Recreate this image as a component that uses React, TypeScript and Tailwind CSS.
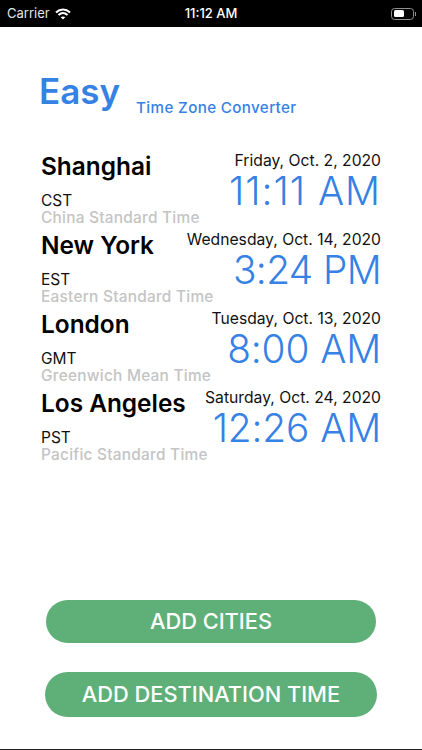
const cities = [
  { name: "Shanghai", abbr: "CST", full: "China Standard Time", date: "Friday, Oct. 2, 2020", time: "11:11 AM", timeClass: "tracking-[1px]" },
  { name: "New York", abbr: "EST", full: "Eastern Standard Time", date: "Wednesday, Oct. 14, 2020", time: "3:24 PM", timeClass: "tracking-[-0.6px]" },
  { name: "London", abbr: "GMT", full: "Greenwich Mean Time", date: "Tuesday, Oct. 13, 2020", time: "8:00 AM", timeClass: "tracking-[-0.1px]" },
  { name: "Los Angeles", abbr: "PST", full: "Pacific Standard Time", date: "Saturday, Oct. 24, 2020", time: "12:26 AM", timeClass: "tracking-[-0.1px]" },
];

function Wifi() {
  return (
    <svg width="16" height="12" viewBox="0 0 16 12" fill="none" stroke="white" strokeWidth="2.1">
      <path d="M1 4.4C5 .6 11 .6 15 4.4" />
      <path d="M3.5 7c2.7-2.4 6.3-2.4 9 0" />
      <path d="M8 11.6 5.7 9.2c1.3-1 3.3-1 4.6 0z" fill="white" stroke="none" />
    </svg>
  );
}

function Battery() {
  return (
    <div className="flex items-center gap-px">
      <div className="flex h-[12px] w-[23px] items-center rounded-[3.5px] border border-[#8f8f8f] p-[1.5px]">
        <div className="h-full w-[10px] rounded-[1.5px] bg-white" />
      </div>
      <div className="h-[4px] w-px bg-[#8f8f8f]" />
    </div>
  );
}

export default function App() {
  return (
    <div className="flex h-[750px] w-[422px] flex-col overflow-hidden bg-white font-['Inter',sans-serif]">
      <div className="relative flex h-[27px] shrink-0 items-center justify-between bg-black pl-[7px] pr-[6px] text-white">
        <div className="flex items-center gap-[5px] text-[13px]">
          <span className="text-[#e4e4e4]">Carrier</span>
          <Wifi />
        </div>
        <span className="absolute left-0 right-0 text-center text-[13px] font-medium">11:12 AM</span>
        <Battery />
      </div>

      <div className="mt-[44px] flex h-[46px] items-end pl-[39px]">
        <span className="mb-[6px] text-[35px] leading-[40px] font-semibold text-[#3681e4]">Easy</span>
        <span className="ml-[16px] text-[15.2px] leading-[18px] font-medium tracking-[0.35px] text-[#3681e4]">Time Zone Converter</span>
      </div>

      <div className="mt-[29px] flex flex-col px-[41px]">
        {cities.map((c) => (
          <div key={c.name} className="flex h-[79px] justify-between">
            <div className="flex w-0 flex-col">
              <div className="mt-[5px] h-[30px] text-[24.4px] leading-[30px] font-semibold whitespace-nowrap text-black">{c.name}</div>
              <div className="mt-[11px] h-[18px] text-[15.5px] leading-[18px] text-[#111]">{c.abbr}</div>
              <div className="h-[16px] text-[15.4px] leading-[16px] font-medium tracking-[0.25px] whitespace-nowrap text-[#c4c4c4]">{c.full}</div>
            </div>
            <div className="flex flex-col items-end">
              <div className="mt-[6px] text-[15.7px] leading-[18px] whitespace-nowrap text-[#111]">{c.date}</div>
              <div className={`mt-[1px] text-[38.8px] leading-[40px] font-[350] whitespace-nowrap text-[#3681e4] ${c.timeClass}`}>{c.time}</div>
            </div>
          </div>
        ))}
      </div>

      <div className="mt-auto flex flex-col items-center pb-[32px]">
        <button className="flex h-[43px] w-[330px] items-center justify-center rounded-full bg-[#5eb078] text-[21.8px] font-medium text-white">ADD CITIES</button>
        <button className="mt-[29px] flex h-[45px] w-[332px] items-center justify-center rounded-full bg-[#5eb078] text-[21.8px] font-medium text-white">ADD DESTINATION TIME</button>
      </div>
      <div className="h-px shrink-0 bg-[#222]" />
    </div>
  );
}
